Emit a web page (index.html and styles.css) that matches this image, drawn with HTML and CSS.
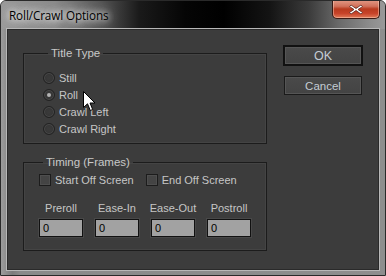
FILE: index.html
```html
<!DOCTYPE html>
<html>
<head>
<meta charset="utf-8">
<link rel="stylesheet" href="styles.css">
</head>
<body>
<div class="window">
  <div class="titlebar">
    <span class="title">Roll/Crawl Options</span>
    <div class="close">
      <svg width="16" height="11" viewBox="0 0 16 11"><path d="M3 1 L8 4.5 L13 1 L14.5 2.5 L10 5.5 L14.5 8.5 L13 10 L8 6.5 L3 10 L1.5 8.5 L6 5.5 L1.5 2.5 Z" fill="#fff" stroke="#5a2a22" stroke-width="0.8"/></svg>
    </div>
  </div>
  <div class="client">
    <div class="left">
      <fieldset class="group group-type">
        <legend>Title Type</legend>
        <div class="radio"><span class="circle"></span><span>Still</span></div>
        <div class="radio"><span class="circle on"></span><span>Roll</span></div>
        <div class="radio"><span class="circle"></span><span>Crawl Left</span></div>
        <div class="radio"><span class="circle"></span><span>Crawl Right</span></div>
      </fieldset>
      <fieldset class="group group-timing">
        <legend>Timing (Frames)</legend>
        <div class="checks">
          <div class="check"><span class="box"></span><span>Start Off Screen</span></div>
          <div class="check"><span class="box"></span><span>End Off Screen</span></div>
        </div>
        <div class="fields">
          <div class="field"><span class="flabel">Preroll</span><div class="input">0</div></div>
          <div class="field"><span class="flabel">Ease-In</span><div class="input">0</div></div>
          <div class="field"><span class="flabel">Ease-Out</span><div class="input">0</div></div>
          <div class="field"><span class="flabel">Postroll</span><div class="input">0</div></div>
        </div>
      </fieldset>
    </div>
    <div class="right">
      <div class="btn btn-default">OK</div>
      <div class="btn">Cancel</div>
    </div>
  </div>
  <div class="cursor">
    <svg width="13" height="21" viewBox="0 0 13 21"><path d="M0.5 0.5 L0.5 16.5 L4.5 12.8 L7.3 19.5 L9.7 18.5 L7 12 L12 12 Z" fill="#fff" stroke="#000" stroke-width="1" stroke-linejoin="miter"/></svg>
  </div>
</div>
</body>
</html>
```

FILE: styles.css
```css
* { box-sizing: border-box; }
html, body { margin: 0; padding: 0; background: #fff; }
body { width: 386px; height: 276px; overflow: hidden; }

.window {
  position: relative;
  width: 386px;
  height: 276px;
  border: 1px solid #2a2a2a;
  border-radius: 6px 6px 0 0;
  background: linear-gradient(90deg, #9c9c9c 0%, #7c7c7c 3%, #8a8a8a 5%, #8e8e8e 100%);
  display: flex;
  flex-direction: column;
  overflow: hidden;
}

.titlebar {
  height: 28px;
  display: flex;
  align-items: flex-start;
  padding-left: 8px;
  background: linear-gradient(90deg, #9a9a9a 0%, #8a8a8a 14%, #555 26%, #1a1a1a 36%, #050505 48%, #000 58%, #141414 70%, #3a3a3a 80%, #6a6a6a 88%, #8c8c8c 96%, #999 100%);
}
.title {
  font-family: "Open Sans", "Noto Sans", sans-serif;
  font-size: 11.7px;
  line-height: 16px;
  margin-top: 6px;
  color: #000;
  text-shadow: 0 0 6px #fff, 0 0 10px #ddd, 0 0 14px #ccc;
  letter-spacing: -0.1px;
}
.close {
  margin-left: auto;
  margin-right: 5px;
  width: 48px;
  height: 19px;
  margin-top: -1px;
  border: 1px solid #3a1a14;
  border-top: none;
  border-radius: 0 0 5px 5px;
  background: linear-gradient(180deg, #e29a86 0%, #d0705a 35%, #b83a1e 50%, #c8442a 75%, #e07a58 100%);
  box-shadow: inset 0 0 0 1px rgba(255,220,200,0.45);
  display: flex;
  align-items: center;
  justify-content: center;
}
.close svg { display: block; }

.client {
  margin-left: 6px;
  width: 372px;
  height: 241px;
  background: #3c3c3c;
  border: 1px solid #2a2a2a;
  box-shadow: 0 0 0 1px #b8b8b8;
  display: flex;
  font-family: "Liberation Sans", Arial, sans-serif;
  font-size: 11px;
  color: #c6c6c6;
}

.left {
  width: 260px;
  padding-left: 15px;
  padding-top: 16px;
  display: flex;
  flex-direction: column;
  gap: 11px;
}

.group {
  margin: 0;
  padding: 0;
  border: 1px solid #1c1c1c;
  box-shadow: inset 0 0 0 1px #444;
  width: 244px;
}
.group legend {
  margin-left: 5px;
  padding: 0 3px;
  line-height: 14px;
  font-size: 11.5px;
  color: #c8c8c8;
}
.group-type {
  height: 98px;
  padding: 9px 0 0 19px;
}
.group-timing {
  height: 96px;
  padding: 3px 0 0 14px;
}

.radio {
  height: 17px;
  display: flex;
  align-items: center;
  gap: 4px;
}
.circle {
  width: 12px;
  height: 12px;
  border-radius: 50%;
  border: 1px solid #222;
  background: radial-gradient(circle, #3a3a3a 0%, #363636 60%, #2e2e2e 100%);
  box-shadow: inset 0 0 0 1px #4a4a4a;
  display: flex;
  align-items: center;
  justify-content: center;
}
.circle.on::after {
  content: "";
  width: 4px;
  height: 4px;
  border-radius: 50%;
  background: #b4b4b4;
}

.checks {
  display: flex;
  height: 16px;
  align-items: center;
  padding-left: 1px;
}
.check {
  display: flex;
  align-items: center;
  gap: 4px;
}
.check + .check { margin-left: 12px; }
.box {
  width: 12px;
  height: 12px;
  border: 1px solid #1c1c1c;
  background: #444;
  box-shadow: inset 0 0 0 1px #4e4e4e;
}

.fields {
  display: flex;
  gap: 12px;
  margin-top: 13px;
  padding-left: 1px;
}
.field {
  display: flex;
  flex-direction: column;
  align-items: center;
  width: 44px;
}
.flabel {
  line-height: 14px;
  white-space: nowrap;
}
.input {
  margin-top: 4px;
  width: 44px;
  height: 18px;
  background: #a2a2a2;
  border: 1px solid #111;
  box-shadow: 0 0 0 1px #484848;
  color: #000;
  padding-left: 3px;
  line-height: 16px;
  align-self: stretch;
}

.right {
  padding-top: 15px;
  padding-left: 15px;
  display: flex;
  flex-direction: column;
  gap: 10px;
}
.btn {
  width: 78px;
  height: 19px;
  background: linear-gradient(180deg, #4a4a4a, #434343);
  border: 1px solid #1a1a1a;
  box-shadow: inset 0 0 0 1px #555;
  color: #c4ccd4;
  font-size: 11.5px;
  display: flex;
  align-items: center;
  justify-content: center;
  margin-left: 1px;
}
.btn-default {
  width: 80px;
  height: 21px;
  margin-left: 0;
  border: 2px solid #111;
  font-size: 12.5px;
}

.cursor {
  position: absolute;
  left: 82px;
  top: 90px;
}
.cursor svg { display: block; }
```
